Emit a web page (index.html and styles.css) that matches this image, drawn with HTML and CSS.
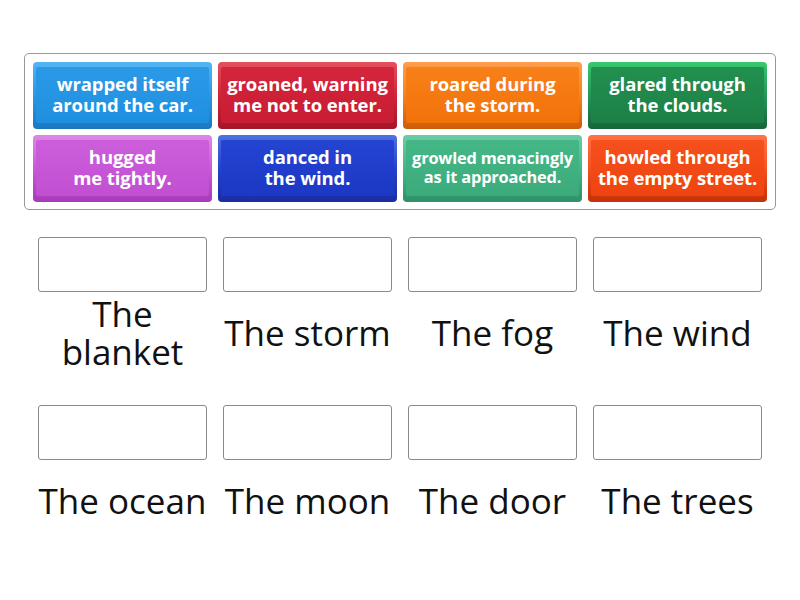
FILE: index.html
```html
<!DOCTYPE html>
<html>
<head>
<meta charset="utf-8">
<link rel="stylesheet" href="styles.css">
</head>
<body>
<div class="page">
  <div class="bank">
    <div class="tile blue"><div class="face">wrapped itself<br>around the car.</div></div>
    <div class="tile red"><div class="face">groaned, warning<br>me not to enter.</div></div>
    <div class="tile orange"><div class="face">roared during<br>the storm.</div></div>
    <div class="tile green"><div class="face">glared through<br>the clouds.</div></div>
    <div class="tile purple"><div class="face">hugged<br>me tightly.</div></div>
    <div class="tile navy"><div class="face">danced in<br>the wind.</div></div>
    <div class="tile teal"><div class="face small">growled menacingly<br>as it approached.</div></div>
    <div class="tile vermilion"><div class="face">howled through<br>the empty street.</div></div>
  </div>
  <div class="targets">
    <div class="cell"><div class="slot"></div><div class="label">The<br>blanket</div></div>
    <div class="cell"><div class="slot"></div><div class="label">The storm</div></div>
    <div class="cell"><div class="slot"></div><div class="label">The fog</div></div>
    <div class="cell"><div class="slot"></div><div class="label">The wind</div></div>
    <div class="cell"><div class="slot"></div><div class="label">The ocean</div></div>
    <div class="cell"><div class="slot"></div><div class="label">The moon</div></div>
    <div class="cell"><div class="slot"></div><div class="label">The door</div></div>
    <div class="cell"><div class="slot"></div><div class="label">The trees</div></div>
  </div>
</div>
</body>
</html>
```

FILE: styles.css
```css
html, body {
  margin: 0;
  padding: 0;
  background: #fff;
}
body {
  font-family: "Open Sans", "Noto Sans", sans-serif;
  width: 800px;
  height: 600px;
  overflow: hidden;
}
.page {
  padding: 53px 24px 0 24px;
}
.bank {
  border: 1px solid #999;
  border-radius: 5px;
  padding: 8px 8px 6px 8px;
  display: grid;
  grid-template-columns: repeat(4, 179px);
  grid-auto-rows: 67px;
  gap: 6px;
  box-sizing: border-box;
  height: 157px;
}
.tile {
  border-radius: 4px;
  padding: 5px 3px 6px 3px;
  box-sizing: border-box;
  display: flex;
}
.face {
  flex: 1;
  border-radius: 2px;
  display: flex;
  align-items: center;
  justify-content: center;
  text-align: center;
  color: #fff;
  font-weight: 700;
  font-size: 18.5px;
  line-height: 21px;
  white-space: nowrap;
  letter-spacing: -0.1px;
  padding-bottom: 3px;
}
.face.small {
  font-size: 16.4px;
  line-height: 19px;
  letter-spacing: -0.2px;
}
.blue { background: linear-gradient(#55b5f3, #2a98e4 50%, #1a78c0); }
.blue .face { background: linear-gradient(#2a9ae8, #1f8fdf); }
.red { background: linear-gradient(#e4505f, #d22536 50%, #a6142a); }
.red .face { background: linear-gradient(#d4253c, #c81d34); }
.orange { background: linear-gradient(#ff9e4e, #f7821e 50%, #cd5c08); }
.orange .face { background: linear-gradient(#f88018, #f2720a); }
.green { background: linear-gradient(#38c86e, #25975a 50%, #15663a); }
.green .face { background: linear-gradient(#22904f, #1c8046); }
.purple { background: linear-gradient(#dc88e8, #c95ad8 50%, #a73ab8); }
.purple .face { background: linear-gradient(#cc5edb, #c24fd2); }
.navy { background: linear-gradient(#5070e2, #2442d0 50%, #192ca4); }
.navy .face { background: linear-gradient(#2444d2, #1c38c4); }
.teal { background: linear-gradient(#6ccca4, #44b787 50%, #2e9068); }
.teal .face { background: linear-gradient(#45b787, #3cab7c); }
.vermilion { background: linear-gradient(#ff7448, #f65220 50%, #c43008); }
.vermilion .face { background: linear-gradient(#f6501c, #ee4410); }

.targets {
  display: grid;
  grid-template-columns: repeat(4, 185px);
  margin-top: 27px;
  margin-left: 6px;
}
.cell {
  display: flex;
  flex-direction: column;
  align-items: center;
  padding-bottom: 29px;
}
.slot {
  width: 169px;
  height: 55px;
  box-sizing: border-box;
  border: 1px solid #8a8a8a;
  border-radius: 3px;
}
.label {
  height: 84px;
  box-sizing: border-box;
  padding-bottom: 3px;
  display: flex;
  align-items: center;
  justify-content: center;
  text-align: center;
  font-size: 35px;
  line-height: 38px;
  color: #111;
  white-space: nowrap;
}
```
